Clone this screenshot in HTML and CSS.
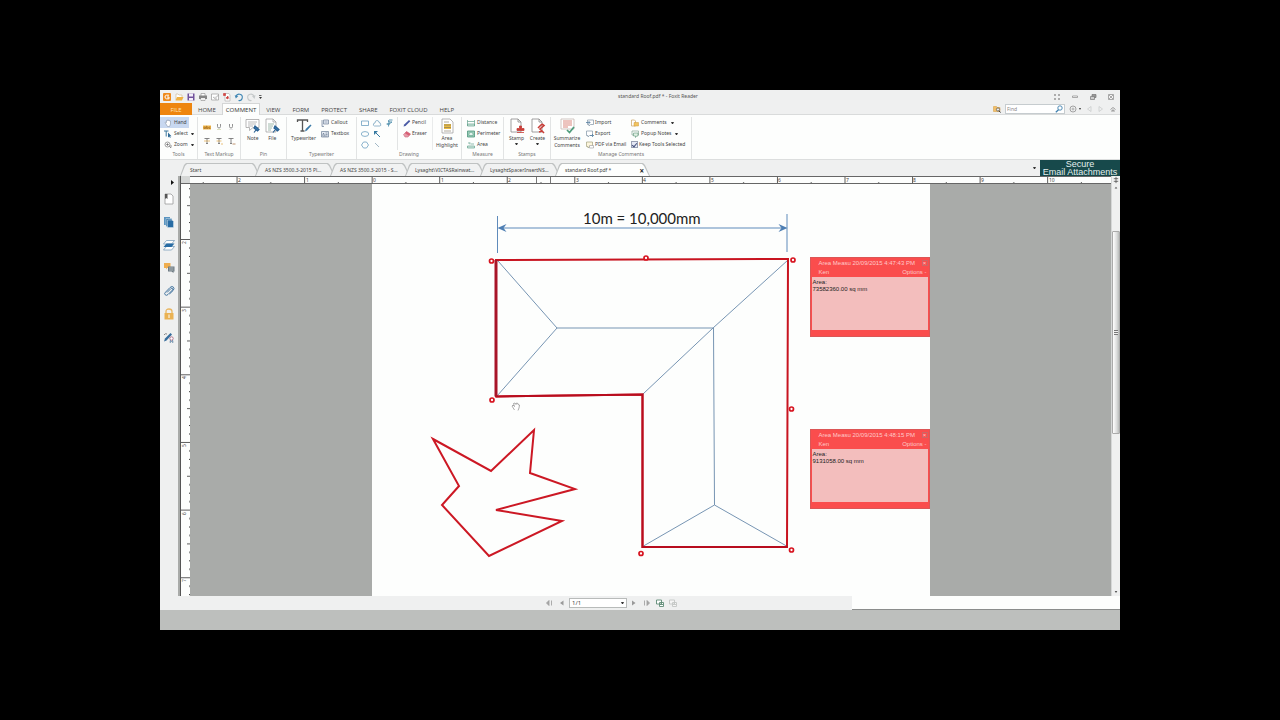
FILE: index.html
```html
<!DOCTYPE html>
<html lang="en">
<head>
<meta charset="utf-8">
<title>standard Roof.pdf * - Foxit Reader</title>
<link rel="stylesheet" href="styles.css">
</head>
<body>
<main class="app">
  <header class="titlebar">
    <nav class="quick" aria-label="Quick access">
      <button aria-label="Foxit"><svg viewBox="0 0 10 10"><rect x="1" y="1" width="8" height="8" rx="1" fill="#ef8a1d"/><path d="M7 3.2H4.2Q3 3.5 3 5t1.400 1.800H7V5H5" fill="none" stroke="#fff" stroke-width="1"/></svg></button>
      <button aria-label="Open"><svg viewBox="0 0 10 10"><path d="M2 8V2h2l1 1h3v2" fill="#fff" stroke="#c9b48d" stroke-width=".6"/><path d="M1.500 8.500 3 5h6.500L8 8.500z" fill="#f0b243"/></svg></button>
      <button aria-label="Save"><svg viewBox="0 0 10 10"><path d="M1.500 1.500h7v7h-7z" fill="#70509a"/><path d="M3 1.500h4v3H3zM3 6h4v2.500H3z" fill="#f3eefa"/></svg></button>
      <button aria-label="Print"><svg viewBox="0 0 10 10"><path d="M3 1.500h4v3H3zM3 6h4v2.500H3z" fill="#fff" stroke="#888" stroke-width=".6"/><path d="M1 3.500h8v3.500H1z" fill="#858585"/><path d="M3 6h4v2H3z" fill="#eee"/></svg></button>
      <button aria-label="Email"><svg viewBox="0 0 10 10"><path d="M1.500 2h7v6h-7zM3 5l2 1.500L8.500 3M5 7h2" fill="#fff" stroke="#999" stroke-width=".7"/></svg></button>
      <button aria-label="Create PDF"><svg viewBox="0 0 10 10"><path d="M3 1.500h4l1 1.500v6H3z" fill="#fff" stroke="#aaa" stroke-width=".6"/><path d="M1.500 1.500h2V3.500h-2zM4 6l2-2v3zM6 5l1 1.500" fill="#d14b45" stroke="#c33" stroke-width=".6"/></svg></button>
      <button aria-label="Undo"><svg viewBox="0 0 10 10"><path d="M2 4.500a3.200 3.200 0 1 1 2.500 4" fill="none" stroke="#3e86b4" stroke-width="1.100"/><path d="M.7 3.200 4.300 4 1.800 6.500z" fill="#3e86b4"/></svg></button>
      <button aria-label="Redo"><svg viewBox="0 0 10 10"><path d="M8 4.500a3.200 3.200 0 1 0-2.500 4" fill="none" stroke="#c5c9ca" stroke-width="1.100"/><path d="M9.500 3.200 6 4l2.500 3z" fill="#c5c9ca"/></svg></button>
      <button class="slim" aria-label="Customize"><svg viewBox="0 0 5 10"><path d="M1 3.500h2.500" stroke="#444" stroke-width=".8"/><path d="M1 5h3L2.500 7z" fill="#333"/></svg></button>
    </nav>
    <h1 class="title">standard Roof.pdf * - Foxit Reader</h1>
    <div class="window-buttons">
      <button aria-label="Ribbon options"><svg viewBox="0 0 8 8"><path d="M1 1h2v2H1zM5 1h2v2H5zM1 5h2v2H1zM5 5h2v2H5z" fill="#888" stroke="#eff0f0" stroke-width=".4"/></svg></button>
      <button aria-label="Minimize"><svg viewBox="0 0 8 8"><path d="M1.500 3h5v1.500h-5z" fill="#fff" stroke="#888" stroke-width=".7"/></svg></button>
      <button aria-label="Restore"><svg viewBox="0 0 8 8"><path d="M3 1.500h4v3H3z" fill="#999" stroke="#777" stroke-width=".7"/><path d="M1.500 3.500h4v3h-4z" fill="#ccc" stroke="#777" stroke-width=".7"/></svg></button>
      <button aria-label="Close"><svg viewBox="0 0 8 8"><path d="M1.500 1.500h5v5h-5zM2 2l4 4M6 2 2 6" fill="#f4f4f4" stroke="#888" stroke-width=".7"/></svg></button>
    </div>
  </header>

  <div class="menu-row">
    <nav class="menu" aria-label="Ribbon tabs">
      <button class="file">FILE</button>
      <button>HOME</button>
      <button class="current">COMMENT</button>
      <button>VIEW</button>
      <button>FORM</button>
      <button>PROTECT</button>
      <button>SHARE</button>
      <button>FOXIT CLOUD</button>
      <button>HELP</button>
    </nav>
    <div class="search">
      <button aria-label="Search folder"><svg viewBox="0 0 8 8"><path d="M.5 1.500h3l.5 1h3v4H.5z" fill="#f3c069" stroke="#d39a3c" stroke-width=".5"/><circle cx="5" cy="4.500" r="1.600" fill="#eee" stroke="#555" stroke-width=".7"/><path d="m6 5.800 1.500 1.700" stroke="#333"/></svg></button>
      <label class="find"><input type="text" placeholder="Find" aria-label="Find"><svg viewBox="0 0 8 8"><circle cx="5" cy="3" r="2.200" fill="#fff" stroke="#3c7fae" stroke-width=".9"/><path d="M3.500 4.800.8 7.300" stroke="#3c7fae" stroke-width="1.300"/></svg></label>
      <button class="gear" aria-label="Settings"><svg viewBox="0 0 12 8"><circle cx="4" cy="4" r="3" fill="none" stroke="#999" stroke-width=".9"/><circle cx="4" cy="4" r="1" fill="none" stroke="#999" stroke-width=".7"/><path d="M10 3h2l-1 2z" fill="#333"/></svg></button>
      <button aria-label="Previous"><svg viewBox="0 0 8 8"><path d="M6 1.500v5L2.500 4z" fill="none" stroke="#c6c8c8" stroke-width=".7"/></svg></button>
      <button aria-label="Next"><svg viewBox="0 0 8 8"><path d="M2 1.500v5L5.500 4z" fill="none" stroke="#c6c8c8" stroke-width=".7"/></svg></button>
      <button aria-label="Collapse ribbon"><svg viewBox="0 0 8 8"><path d="m1.500 4.500 2.500-2 2.500 2M2.500 6 4 4.700 5.500 6z" fill="none" stroke="#777" stroke-width=".7"/></svg></button>
    </div>
  </div>

  <section class="ribbon" aria-label="Comment tools">
    <div class="group tools">
      <div class="group-body"><div class="stack">
        <button class="row selected"><svg viewBox="0 0 8 8"><path d="M2 5 1 3.500l1-.5.500.5V1.500h1V1h1v.5h1v.500h1V5L5.500 7.500h-2z" fill="#fff" stroke="#8796a8" stroke-width=".6"/></svg>Hand</button>
        <button class="row"><svg viewBox="0 0 8 8"><path d="M0 1h4.500M2.200 1v5.500" stroke="#3c779d" stroke-width="1"/><path d="M4 2.500v5l1.300-1L6 8l.7-.5-.7-1.300h1.500z" fill="#2e6a96"/></svg>Select<i class="caret"></i></button>
        <button class="row"><svg viewBox="0 0 8 8"><circle cx="3.500" cy="3.500" r="2.500" fill="#fff" stroke="#777" stroke-width=".7"/><path d="M2.200 3.500h2.600M3.500 2.200v2.600M5.300 5.300 7 7M7 4v2.500" stroke="#666" stroke-width=".7"/></svg>Zoom<i class="caret"></i></button>
      </div></div>
      <h2>Tools</h2>
    </div>
    <div class="group markup">
      <div class="group-body marks">
        <button aria-label="Highlight"><svg viewBox="0 0 10 10"><path d="M1 3.500h8v4H1z" fill="#efb74b"/><path d="M2 6.500V5h1.500v1.500zM4.500 3.800v2.700H6V5H4.500M8.500 5H7v1.500h1.500" fill="none" stroke="#9b6722" stroke-width=".6"/></svg></button>
        <button aria-label="Squiggly"><svg viewBox="0 0 10 10"><path d="M3.500 2v2.500Q3.500 6 5 6t1.500-1.500V2" fill="none" stroke="#777" stroke-width=".8"/><path d="M3 7.500h4" stroke="#ccd6a5" stroke-width=".7"/></svg></button>
        <button aria-label="Underline"><svg viewBox="0 0 10 10"><path d="M3.500 2v2.500Q3.500 6 5 6t1.500-1.500V2" fill="none" stroke="#777" stroke-width=".8"/><path d="M3 7.500h4" stroke="#ddd" stroke-width=".7"/></svg></button>
        <button aria-label="Strikeout"><svg viewBox="0 0 10 10"><path d="M2.500 2.500h5M5 2.500v5M4 7.500h2" stroke="#777" stroke-width=".9"/><path d="M2 5h6" stroke="#e5b35c" stroke-width=".8"/></svg></button>
        <button aria-label="Replace"><svg viewBox="0 0 10 10"><path d="M2.500 2.500h5M5 2.500v5M4 7.500h2" stroke="#777" stroke-width=".9"/><path d="M2.500 5h5M7 8h2" stroke="#e5b35c" stroke-width=".8"/></svg></button>
        <button aria-label="Insert"><svg viewBox="0 0 10 10"><path d="M2.500 2.500h5M5 2.500v5M4 7.500h2" stroke="#777" stroke-width=".9"/><path d="M6.500 8h3" stroke="#b07c4f" stroke-width=".8"/></svg></button>
      </div>
      <h2>Text Markup</h2>
    </div>
    <div class="group pin">
      <div class="group-body">
        <button class="big"><svg viewBox="0 0 16 16"><path d="M1 1.500h13v8H8l-3.500 3v-3H1z" fill="#fff" stroke="#999" stroke-width=".7"/><path d="M3 4h9M3 6h8M3 8h5" stroke="#aaa" stroke-width=".8"/><path d="m10 8 4 3.500-1.500 1.500L9 10zM9 14.500l2-2.500" stroke="#285f91" stroke-width="1.200" fill="#3b78ae"/></svg>Note</button>
        <button class="big"><svg viewBox="0 0 16 16"><path d="M2 1h7l3 3v10H2zM9 1v3h3" fill="#fff" stroke="#999" stroke-width=".7"/><path d="M4 6h6M4 8h5M4 10h4M4 12h3" stroke="#88a898" stroke-width=".8"/><path d="m11 8 4 3.500-1.500 1.500L10 10zM9 14.500l2-2.500" stroke="#285f91" stroke-width="1.200" fill="#3b78ae"/></svg>File</button>
      </div>
      <h2>Pin</h2>
    </div>
    <div class="group typewriter">
      <div class="group-body">
        <button class="big"><svg viewBox="0 0 16 16"><path d="M1.500 4V2h10v2M6.500 2v11M4.500 13h4" fill="none" stroke="#555" stroke-width="1.300"/><path d="m9 13.500.700-2.500L14.500 6.500l1 1L11 12.500z" fill="#3b7aa8"/></svg>Typewriter</button>
        <div class="stack">
          <button class="row"><svg viewBox="0 0 8 8"><path d="M2.500 1h5v4h-5zM1 1v6.500h2" fill="#e6ecf4" stroke="#6d7f96" stroke-width=".7"/><path d="M3.500 2.300h3M3.500 3.700h3" stroke="#8d9bb0" stroke-width=".5"/></svg>Callout</button>
          <button class="row"><svg viewBox="0 0 8 8"><path d="M.5 1.500h7v5.500h-7z" fill="#e6ecf4" stroke="#6d7f96" stroke-width=".7"/><path d="m1.500 5.500 1-2.500 1 2.500M4.500 3h2M4.500 4.500h2M1.500 6h5" fill="none" stroke="#52657e" stroke-width=".6"/></svg>Textbox</button>
        </div>
      </div>
      <h2>Typewriter</h2>
    </div>
    <div class="group drawing">
      <div class="group-body">
        <div class="shapes">
          <button aria-label="Rectangle"><svg viewBox="0 0 10 10"><path d="M1.500 3h7v4.500h-7z" fill="none" stroke="#6c9fc0" stroke-width=".8"/></svg></button>
          <button aria-label="Cloud"><svg viewBox="0 0 10 10"><path d="M2.500 8Q.8 7.500 1.500 6 1.500 5 3 5q0-2.500 2-2.500T7 4.500q1.500 0 1.500 1.500 1 1.500-.5 2z" fill="none" stroke="#7ba6c1" stroke-width=".8"/></svg></button>
          <button aria-label="Polyline"><svg viewBox="0 0 10 10"><path d="M8.500 2H5Q3.500 3 5 4h3L5 6H2.500M5 3l-.5 5.500M6 6H3" fill="none" stroke="#4f8fad" stroke-width=".9"/></svg></button>
          <button aria-label="Oval"><svg viewBox="0 0 10 10"><ellipse cx="5" cy="5" rx="3.700" ry="2.400" fill="none" stroke="#6c9fc0" stroke-width=".8"/></svg></button>
          <button aria-label="Arrow"><svg viewBox="0 0 10 10"><path d="m3 3 5 5" stroke="#3679a1" stroke-width="1"/><path d="M2 2h4L2 6z" fill="#3679a1"/></svg></button>
          <span></span>
          <button aria-label="Polygon"><svg viewBox="0 0 10 10"><path d="M3.500 2h3L8.500 5 6.500 8h-3L1.500 5z" fill="none" stroke="#6c9fc0" stroke-width=".8"/></svg></button>
          <button aria-label="Line"><svg viewBox="0 0 10 10"><path d="m3 3 4 4" stroke="#8aa6b8" stroke-width=".8"/></svg></button>
        </div>
        <div class="stack pens">
          <button class="row"><svg viewBox="0 0 8 8"><path d="m.5 7.500.7-2L6 1l1.300 1.200L2.500 7z" fill="#4a5ba5"/></svg>Pencil</button>
          <button class="row"><svg viewBox="0 0 8 8"><path d="m.5 4.500 3-3 4 2.500-2.500 3H2z" fill="#e59aa8" stroke="#cf6d80" stroke-width=".6"/><path d="m3.500 1.500 4 2.500-1.500 1.700-4-2.500z" fill="#d75f75"/></svg>Eraser</button>
        </div>
        <button class="big area"><svg viewBox="0 0 16 16"><path d="M3 1h8l3 3v11H3z" fill="#fff" stroke="#999" stroke-width=".7"/><path d="M5 6h7v5H5z" fill="#e8bb42"/><path d="M5 4h5M5 7h7M5 9.500h7M5 13h7" stroke="#796f5a" stroke-width=".6"/></svg>Area<br>Highlight</button>
      </div>
      <h2>Drawing</h2>
    </div>
    <div class="group measure">
      <div class="group-body"><div class="stack">
        <button class="row"><svg viewBox="0 0 8 8"><path d="M.5 1v6M7.500 1v6M.5 2.500h7M.5 5h7v2h-7z" fill="#cfe6dc" stroke="#63a28d" stroke-width=".7"/></svg>Distance</button>
        <button class="row"><svg viewBox="0 0 8 8"><path d="M.5 1h7v6h-7z" fill="#9bcdb9" stroke="#4e967c" stroke-width=".8"/><path d="M2 3.500 4 2l2 1.500v2H2z" fill="#e4f3ed" stroke="#4e967c" stroke-width=".5"/></svg>Perimeter</button>
        <button class="row"><svg viewBox="0 0 8 8"><path d="M.5 7V5h7v2zM1 2h2M4 3h3M3 1.500v2" fill="#d8ebe4" stroke="#63a28d" stroke-width=".7"/></svg>Area</button>
      </div></div>
      <h2>Measure</h2>
    </div>
    <div class="group stamps">
      <div class="group-body">
        <button class="big"><svg viewBox="0 0 16 16"><path d="M2 1h7l3 3v10H2zM9 1v3h3" fill="#fff" stroke="#888" stroke-width=".8"/><path d="M10.500 8h2v2.500H15v2H8v-2h2.500zM8 14.500h7" fill="#c83e38" stroke="#c83e38" stroke-width=".8"/></svg>Stamp<i class="caret"></i></button>
        <button class="big"><svg viewBox="0 0 16 16"><path d="M2 1h7l3 3v10H2zM9 1v3h3" fill="#fff" stroke="#888" stroke-width=".8"/><path d="m8 10 4-4M12 6l2 1.500L10 11l4 4M9 14l3-1" fill="none" stroke="#c83e38" stroke-width="1.600"/></svg>Create<i class="caret"></i></button>
      </div>
      <h2>Stamps</h2>
    </div>
    <div class="group manage">
      <div class="group-body">
        <button class="big summary"><svg viewBox="0 0 16 16"><path d="M2 1h13v10H2z" fill="#fff" stroke="#c5b9b3" stroke-width=".8"/><path d="M4 3h9M4 5h9M4 7h9M4 9h5" stroke="#d77b70" stroke-width=".9"/><path d="m8 12 2.500 2.500L15 9" fill="none" stroke="#4e9c7c" stroke-width="1.700"/></svg>Summarize<br>Comments</button>
        <div class="stack transfer">
          <button class="row"><svg viewBox="0 0 8 8"><path d="M1.500 1h6v4.500h-3L3 7V5.500H1.500z" fill="#fff" stroke="#8093a5" stroke-width=".7"/><path d="M0 3.500h4M2.500 2 4 3.500 2.500 5" fill="none" stroke="#547da0" stroke-width=".8"/></svg>Import</button>
          <button class="row"><svg viewBox="0 0 8 8"><path d="M.5 1h6v4.500h-3L2 7V5.500H.5z" fill="#fff" stroke="#8093a5" stroke-width=".7"/><path d="M4 5.500h3.500M6 4l1.500 1.500L6 7" fill="none" stroke="#547da0" stroke-width=".8"/></svg>Export</button>
          <button class="row"><svg viewBox="0 0 8 8"><path d="M.5 1h6v4.500h-3L2 7V5.500H.5z" fill="#fdf6dc" stroke="#a2a080" stroke-width=".7"/><path d="M3.500 4.500h4V7h-4z" fill="#fff" stroke="#999" stroke-width=".6"/></svg>PDF via Email</button>
        </div>
        <div class="stack">
          <button class="row"><svg viewBox="0 0 8 8"><path d="M.5 7V1h3l1 1v5z" fill="#fff" stroke="#c9a15f" stroke-width=".7"/><path d="M3 3.500h4.500V7H3z" fill="#f2c45f" stroke="#cf983b" stroke-width=".5"/></svg>Comments<i class="caret"></i></button>
          <button class="row"><svg viewBox="0 0 8 8"><path d="M1 1h6.500v4H1z" fill="#fff" stroke="#82a392" stroke-width=".7"/><path d="M2.500 3h4.500v3H5.500L4.500 7.500V6h-2z" fill="#e0f0e4" stroke="#5b9577" stroke-width=".6"/></svg>Popup Notes<i class="caret"></i></button>
          <label class="row keep"><input type="checkbox" checked>Keep Tools Selected</label>
        </div>
      </div>
      <h2>Manage Comments</h2>
    </div>
  </section>

  <div class="doc-row">
    <nav class="doc-tabs" aria-label="Open documents">
      <button>Start</button>
      <button>AS NZS 3500.3-2015 Pl...</button>
      <button>AS NZS 3500.3-2015 - S...</button>
      <button>Lysaght\VICTASRainwat...</button>
      <button>LysaghtSpacerInsertNS...</button>
      <button class="open">standard Roof.pdf *<b>×</b></button>
    </nav>
    <button class="more" aria-label="More tabs"><i class="caret"></i></button>
    <a class="promo" href="#">Secure<br>Email Attachments</a>
  </div>

  <div class="work">
    <aside class="side" aria-label="Navigation panels">
      <button class="expand" aria-label="Expand"><svg viewBox="0 0 12 12"><path d="M5 4v5l3-2.500z" fill="#111"/></svg></button>
      <button aria-label="Bookmarks"><svg viewBox="0 0 12 12"><path d="M2 1h6l2 2v8H2z" fill="#fff" stroke="#999" stroke-width=".8"/><path d="M2 1h2.500v5L3.200 5 2 6z" fill="#555"/></svg></button>
      <button aria-label="Pages"><svg viewBox="0 0 12 12"><path d="M1 1h6v8H1z" fill="#5a94c0"/><path d="M3 2.500h6v8H3z" fill="#3d7daf" stroke="#d9e6ef" stroke-width=".5"/><path d="M4.500 4H9l1.500 1.500v6h-6z" fill="#286ca4" stroke="#d9e6ef" stroke-width=".5"/></svg></button>
      <button aria-label="Layers"><svg viewBox="0 0 12 12"><path d="M3.500 1.500h8L8.500 5H.5zM3.500 7.500h8L8.500 11H.5z" fill="#fff" stroke="#6a94b5" stroke-width=".7"/><path d="M3.500 4.500h8L8.500 8H.5z" fill="#286ca4"/></svg></button>
      <button aria-label="Comments"><svg viewBox="0 0 12 12"><path d="M1 1h6.500v5H4L3 7.500V6H1z" fill="#efad4e"/><path d="M5 4.500h6.500v5h-1V11l-2-1.500H5z" fill="#6e7b83"/><path d="M6 6h4.500M6 8h4.500" stroke="#ccd1d4" stroke-width=".7"/></svg></button>
      <button aria-label="Attachments"><svg viewBox="0 0 12 12"><path d="m4 7.500 4-4q1-.8 1.500 0t0 1.500L5 9.500Q3.500 11 2.200 9.800t.3-2.600L7 2.500q2-1.800 3.400-.4t-.3 3.400L6.500 9" fill="none" stroke="#42749f" stroke-width="1"/></svg></button>
      <button aria-label="Security"><svg viewBox="0 0 12 12"><path d="M3 5.500V3.500Q3 1 6 1t3 2.500v2" fill="none" stroke="#e9b763" stroke-width="1.300"/><path d="M1.500 5h9v6.500h-9z" fill="#eab253"/><path d="M6 6.500V10" stroke="#fff"/></svg></button>
      <button aria-label="Signatures"><svg viewBox="0 0 12 12"><path d="m1 10.500 1-3L7.500 2 9 3.500 3.500 9.500z" fill="#376d9c"/><path d="M1 4q1-2 3-1" fill="none" stroke="#888"/><circle cx="8.500" cy="7.500" r="1.700" fill="#fff" stroke="#a75b78" stroke-width=".8"/><path d="m7.500 9-.500 2.500L8.500 10.500l1.500 1L9.500 9" fill="none" stroke="#567ca0" stroke-width=".8"/></svg></button>
    </aside>
    <div class="splitter"></div>
    <div class="viewer">
      <div class="corner"></div>
      <svg class="ruler-x" aria-hidden="true">
        <defs><pattern id="rx" width="67.55" height="8" x="-21" patternUnits="userSpaceOnUse"><path d="M.5 0v8" stroke="#333" stroke-width=".8"/><path d="M34.200 5v3" stroke="#333" stroke-width=".8"/><path d="M8.900 6v2M17.400 6v2M25.800 6v2M42.700 6v2M51.200 6v2M59.600 6v2" stroke="#555" stroke-width=".8"/></pattern></defs>
        <rect width="100%" height="8" fill="url(#rx)"/>
        <path d="M346.500 0v8M360.500 0v8" stroke="#555" stroke-width=".8"/>
        <text x="48" y="5">2</text><text x="116" y="5">1</text><text x="183" y="5">0</text><text x="251" y="5">1</text><text x="318" y="5">2</text><text x="386" y="5">3</text><text x="453" y="5">4</text><text x="521" y="5">5</text><text x="588" y="5">6</text><text x="656" y="5">7</text><text x="723" y="5">8</text><text x="791" y="5">9</text><text x="859" y="5">10</text>
      </svg>
      <svg class="ruler-y" aria-hidden="true">
        <defs><pattern id="ry" width="9" height="67.65" y="55" patternUnits="userSpaceOnUse"><path d="M0 .5h9M6 34.300h3" stroke="#333" stroke-width=".8"/><path d="M8 8.900h1M8 17.400h1M8 25.900h1M8 42.800h1M8 51.200h1M8 59.700h1" stroke="#333"/></pattern></defs>
        <rect width="9" height="100%" fill="url(#ry)"/>
        <g text-anchor="end"><text transform="translate(5 57) rotate(-90)">2</text><text transform="translate(5 125) rotate(-90)">3</text><text transform="translate(5 192) rotate(-90)">4</text><text transform="translate(5 260) rotate(-90)">5</text><text transform="translate(5 328) rotate(-90)">6</text><text transform="translate(5 395) rotate(-90)">7</text></g>
      </svg>
      <div class="canvas">
        <article class="page">
          <svg class="plan" viewBox="371 184 558 412" role="img" aria-label="Roof plan">
            <g fill="none" stroke="#7795b3">
              <path d="M496.500 216v37M786 214v38M499 228h285" stroke="#5f8bbb"/>
              <path d="m496.500 228 9-4-3 4 3 4zM786.500 228l-9-4 3 4-3 4z" fill="#4d7eb3" stroke="none"/>
              <path d="m497 261 59 67h156L787 260M556 328l-60 68M712 328l-70 66M712.500 328l1 177-71 41M713.500 505l72 41"/>
            </g>
            <text class="dimension" x="582" y="224">10m = 10,000mm</text>
            <path d="M495 260 787 259 786 547 641.500 547 641.500 394.500 495 396.500z" fill="none" stroke="#c81420" stroke-width="2"/>
            <path d="M495 260v136.500" stroke="#a81528" stroke-width="3"/><path d="M495 396.500l146.500-2v152.500h145" fill="none" stroke="#b80d1e" stroke-width="2"/>
            <path d="m432 439 58 32 43-41-4 43 45 16-79 21 66 11-73 35-47-51 17-19z" fill="none" stroke="#cc1824" stroke-width="2"/>
            <g fill="#fff" stroke="#d71420" stroke-width="1.700"><circle cx="490.500" cy="261" r="2"/><circle cx="645" cy="258" r="2"/><circle cx="792" cy="260" r="2"/><circle cx="491" cy="400" r="2"/><circle cx="790.500" cy="409" r="2"/><circle cx="640" cy="553.500" r="2"/><circle cx="790.500" cy="550" r="2"/></g>
            <path d="m513.500 410-2.500-4 1-1 1.500 1.500-1-3 1.500-.5 1 1.500.5-1.500 1.500.5v1l1.500.5-.500 3-1 2.500" fill="#fff" stroke="#888" stroke-width=".7"/>
          </svg>
          <section class="note first">
            <header><span>Area Measu 20/09/2015 4:47:43 PM</span><button aria-label="Close note">×</button></header>
            <div class="by"><span>Ken</span><button>Options -</button></div>
            <p>Area:<br>73582360.00 sq mm</p>
          </section>
          <section class="note second">
            <header><span>Area Measu 20/09/2015 4:48:15 PM</span><button aria-label="Close note">×</button></header>
            <div class="by"><span>Ken</span><button>Options -</button></div>
            <p>Area:<br>9131058.00 sq mm</p>
          </section>
        </article>
      </div>
    </div>
    <div class="scroll">
      <svg viewBox="0 0 9 16"><path d="M2 2h5M2 5h5M4.500 0v7" stroke="#444" stroke-width=".8"/><path d="M3 13h3l-1.500-2z" fill="#555"/></svg>
      <div class="track"><div class="thumb"></div></div>
      <svg class="down" viewBox="0 0 9 8"><path d="M3 3h3L4.500 5z" fill="#555"/></svg>
    </div>
  </div>

  <footer class="status">
    <div class="pager">
      <button aria-label="First page"><svg viewBox="0 0 8 8"><path d="M4 1.500v5L1.500 4zM6.500 1.500v5" fill="#aaa" stroke="#999" stroke-width=".8"/></svg></button>
      <button aria-label="Previous page"><svg viewBox="0 0 8 8"><path d="M5.500 1.500v5L2 4z" fill="#999"/></svg></button>
      <label class="page-pick"><select aria-label="Page"><option>1/1</option></select><i class="caret"></i></label>
      <button aria-label="Next page"><svg viewBox="0 0 8 8"><path d="M2 1.500v5L5.500 4z" fill="#999"/></svg></button>
      <button aria-label="Last page"><svg viewBox="0 0 8 8"><path d="M4 1.500v5L6.500 4zM1.500 1.500v5" fill="#aaa" stroke="#999" stroke-width=".8"/></svg></button>
      <button aria-label="Previous view"><svg viewBox="0 0 8 8"><path d="M.5 1h5v4h-5zM3.500 3.500h4v4h-4zM4 5.500h3" fill="#fff" stroke="#5d8a75" stroke-width=".9"/></svg></button>
      <button aria-label="Next view"><svg viewBox="0 0 8 8"><path d="M.5 1h5v4h-5zM3.500 3.500h4v4h-4zM4 5.500h3" fill="#f5f5f5" stroke="#c3c6c4" stroke-width=".9"/></svg></button>
    </div>
    <div class="blank"></div>
  </footer>
  <div class="taskbar"></div>
</main>
</body>
</html>
```
FILE: styles.css
```css
* { box-sizing: border-box; }
body {
  margin: 0;
  min-height: 100vh;
  display: grid;
  place-items: center;
  background: #000;
  color: #444;
  font: 5px/7px "Noto Sans", "Open Sans", sans-serif;
}
button, input, select { font: inherit; color: inherit; margin: 0; padding: 0; border: 0; background: none; }
button { display: flex; align-items: center; justify-content: center; white-space: nowrap; }
h1, h2, p { margin: 0; font: inherit; }
svg { display: block; flex: none; }
.app { width: 75vw; min-height: 75vh; display: flex; flex-direction: column; background: #eff0f0; }
.caret { border: 1px solid transparent; border-top: 2px solid #333; border-bottom: 0; width: 3px; height: 2px; flex: none; }

.titlebar { display: grid; grid-template-columns: 1fr auto 1fr; align-items: center; height: 13px; padding: 0 5px 0 2px; }
.quick { display: flex; gap: 2px; }
.quick svg { width: 10px; height: 10px; }
.quick .slim svg { width: 5px; }
.title { color: #555; padding-left: 39px; }
.window-buttons { display: flex; gap: 10px; justify-content: flex-end; }
.window-buttons svg { width: 8px; height: 8px; }

.menu-row { display: flex; justify-content: space-between; height: 12px; border-bottom: 1px solid #d9dbdb; }
.menu { display: flex; font: 6px/8px "Open Sans", "Noto Sans", sans-serif; }
.menu button { padding: 1px 6px 0; height: 12px; }
.menu .file { width: 32px; background: #ee850f; color: #ffe3bd; padding: 1px 0 0; }
.menu .current { background: #fdfefd; border: 1px solid #d4d6d6; border-bottom: 0; padding: 0 3px; color: #333; }
.search { display: flex; align-items: center; gap: 4px; padding-right: 3px; }
.search svg { width: 8px; height: 8px; }
.search .gear svg { width: 12px; }
.find { display: flex; align-items: center; width: 60px; height: 10px; background: #fff; border: 1px solid #c6cccf; padding: 0 1px; }
.find input { width: 100%; min-width: 0; height: 8px; outline: 0; }
.find input::placeholder { color: #888; opacity: 1; }

.ribbon { display: flex; height: 45px; padding-top: 2px; background: #fdfefd; border-bottom: 1px solid #dcdede; }
.group { display: flex; flex-direction: column; flex: none; border-right: 1px solid #e2e4e4; }
.group-body { display: flex; height: 33px; }
.group h2 { text-align: center; color: #777; line-height: 9px; }
.stack { display: flex; flex-direction: column; }
.row { display: flex; align-items: center; justify-content: flex-start; height: 11px; gap: 2px; white-space: nowrap; }
.row svg { width: 8px; height: 8px; }
.row .caret { margin-left: 2px; }
.big { flex-direction: column; justify-content: flex-start; padding-top: 1px; }
.big svg { width: 16px; height: 16px; margin-bottom: 1px; }
.big .caret { margin-top: 1px; }
.tools { width: 38px; }
.tools .row { padding-left: 4px; }
.tools .row .caret { margin-left: 1px; }
.tools .selected { width: 29px; background: #c8d8f0; }
.markup { width: 43px; }
.marks { display: grid; grid-template-columns: repeat(3, 12px); grid-template-rows: 14px 14px; justify-content: center; align-content: center; }
.marks svg, .shapes svg { width: 10px; height: 10px; }
.pin { width: 46px; }
.pin .group-body { padding: 0 4px 0 2px; }
.pin .big { flex: 1; }
.typewriter { width: 70px; }
.typewriter .group-body { gap: 5px; padding-left: 4px; }
.drawing { width: 105px; }
.shapes { display: grid; grid-template-columns: repeat(3, 12px); grid-template-rows: repeat(3, 11px); padding-left: 2px; }
.pens { margin-left: 2px; padding-left: 5px; border-left: 1px solid #e2e4e4; }
.pens .row { gap: 1px; }
.drawing .area { flex: 1; margin-left: 5px; border-left: 1px solid #e9ebeb; }
.measure { width: 42px; }
.measure .stack { padding-left: 5px; }
.stamps { width: 47px; }
.stamps .group-body { padding: 0 2px; }
.stamps .big { flex: 1; }
.manage { width: 141px; }
.summary { width: 32px; }
.transfer { width: 45px; margin-left: 3px; }
.transfer .row { gap: 1px; }
.keep { gap: 1px; }
.keep input { appearance: none; width: 7px; height: 7px; border: 1px solid #9aa0b4; background: #e5e8f5; display: grid; place-items: center; }
.keep input:checked::after { content: ""; width: 2px; height: 4px; border: solid #44507c; border-width: 0 1px 1px 0; transform: rotate(40deg); }

.doc-row { display: flex; height: 16px; }
.doc-tabs { display: flex; align-items: flex-end; padding-left: 20px; flex: 1; }
.doc-tabs button { position: relative; z-index: 0; justify-content: flex-start; width: 75px; height: 13px; padding: 1px 0 0 10px; }
.doc-tabs button::before, .doc-tabs button::after {
  content: "";
  position: absolute;
  inset: 0 -5px 0 0;
  z-index: -2;
  background: #bfc2c2;
  clip-path: polygon(0 100%, 4px 2px, 6px 0, calc(100% - 7px) 0, calc(100% - 5px) 2px, 100% 100%);
}
.doc-tabs button::after { inset: 1px -4px 0 1px; z-index: -1; background: #f1f2f2; }
.doc-tabs .open { width: 90px; justify-content: space-between; padding: 1px 1px 0 10px; }
.doc-tabs .open::after { background: #fdfefd; }
.doc-tabs b { font-size: 8px; color: #222; }
.more { width: 12px; }
.promo { width: 80px; height: 16px; background: #17494b; color: #e4efee; font: 9px/8px "Liberation Sans", Arial, sans-serif; text-align: center; text-decoration: none; white-space: nowrap; }

.work { flex: 1; display: grid; grid-template-columns: 18px 2px 1fr 9px; min-height: 420px; }
.side { display: flex; flex-direction: column; align-items: center; gap: 11px; }
.side svg { width: 12px; height: 12px; }
.side .expand { height: 12px; margin-bottom: -6px; align-self: flex-end; }
.splitter { background: #a9aba9; }
.viewer { display: grid; grid-template-columns: 9px 1fr; grid-template-rows: 8px 1fr; border-left: 1px solid #555; min-width: 0; }
.corner { background: #d5d7d6; border-bottom: 1px solid #666; }
.ruler-x, .ruler-y { background: #fdfefd; font-size: 5px; fill: #444; }
.ruler-x { width: 100%; height: 8px; border-top: 1px solid #666; border-bottom: 1px solid #666; }
.ruler-y { width: 9px; height: 100%; }
.canvas { display: flex; justify-content: center; background: #a9aba9; min-width: 0; overflow: hidden; }
.page { position: relative; width: 558px; flex: none; background: #fdfefd; }
.plan { width: 100%; height: auto; }
.dimension { font: 15px Lato, sans-serif; fill: #222; }
.note { position: absolute; right: 0; width: 120px; height: 80px; display: flex; flex-direction: column; padding: 0 1px 6px; background: #fa4d4d; border: 1px solid #dc5656; color: #ffc9c9; font: 6px/8px "Liberation Sans", Arial, sans-serif; }
.note.first { top: 73px; }
.note.second { top: 245px; }
.note header, .by { display: flex; justify-content: space-between; white-space: nowrap; padding-left: 7px; height: 10px; align-items: center; }
.note header { height: 9px; }
.note header button { width: 6px; height: 6px; border: 1px solid #c66; font-size: 6px; line-height: 4px; }
.by { padding-right: 1px; }
.note p { flex: 1; background: #f3bebd; color: #222; line-height: 7px; padding-top: 2px; padding-left: 1px; }

.scroll { display: flex; flex-direction: column; background: #eff0f0; border-left: 1px solid #d5d7d7; }
.scroll svg { width: 8px; height: 16px; }
.scroll .down { height: 8px; }
.track { flex: 1; padding-top: 39px; }
.thumb { height: 57%; border: 1px solid #aaa; border-radius: 1px; background: linear-gradient(90deg, #fff, #dcdddd 60%, #b9bcbb); display: grid; place-items: center; }
.thumb::after { content: ""; width: 4px; height: 5px; background: repeating-linear-gradient(#777 0 1px, #eee 1px 2px); }

.status { display: grid; grid-template-columns: 692px 1fr; height: 14px; }
.pager { display: flex; align-items: center; justify-content: flex-end; gap: 5px; padding-right: 175px; }
.pager svg { width: 8px; height: 8px; }
.page-pick { display: flex; align-items: center; width: 58px; height: 10px; margin: 0 -2px; background: #fff; border: 1px solid #b8bbba; padding: 0 2px; }
.page-pick select { flex: 1; appearance: none; font-size: 6px; line-height: 8px; height: 8px; outline: 0; }
.blank { background: #fdfefd; border-bottom: 1px solid #8b8d8c; }
.taskbar { height: 20px; background: #bdbfbd; }
```
